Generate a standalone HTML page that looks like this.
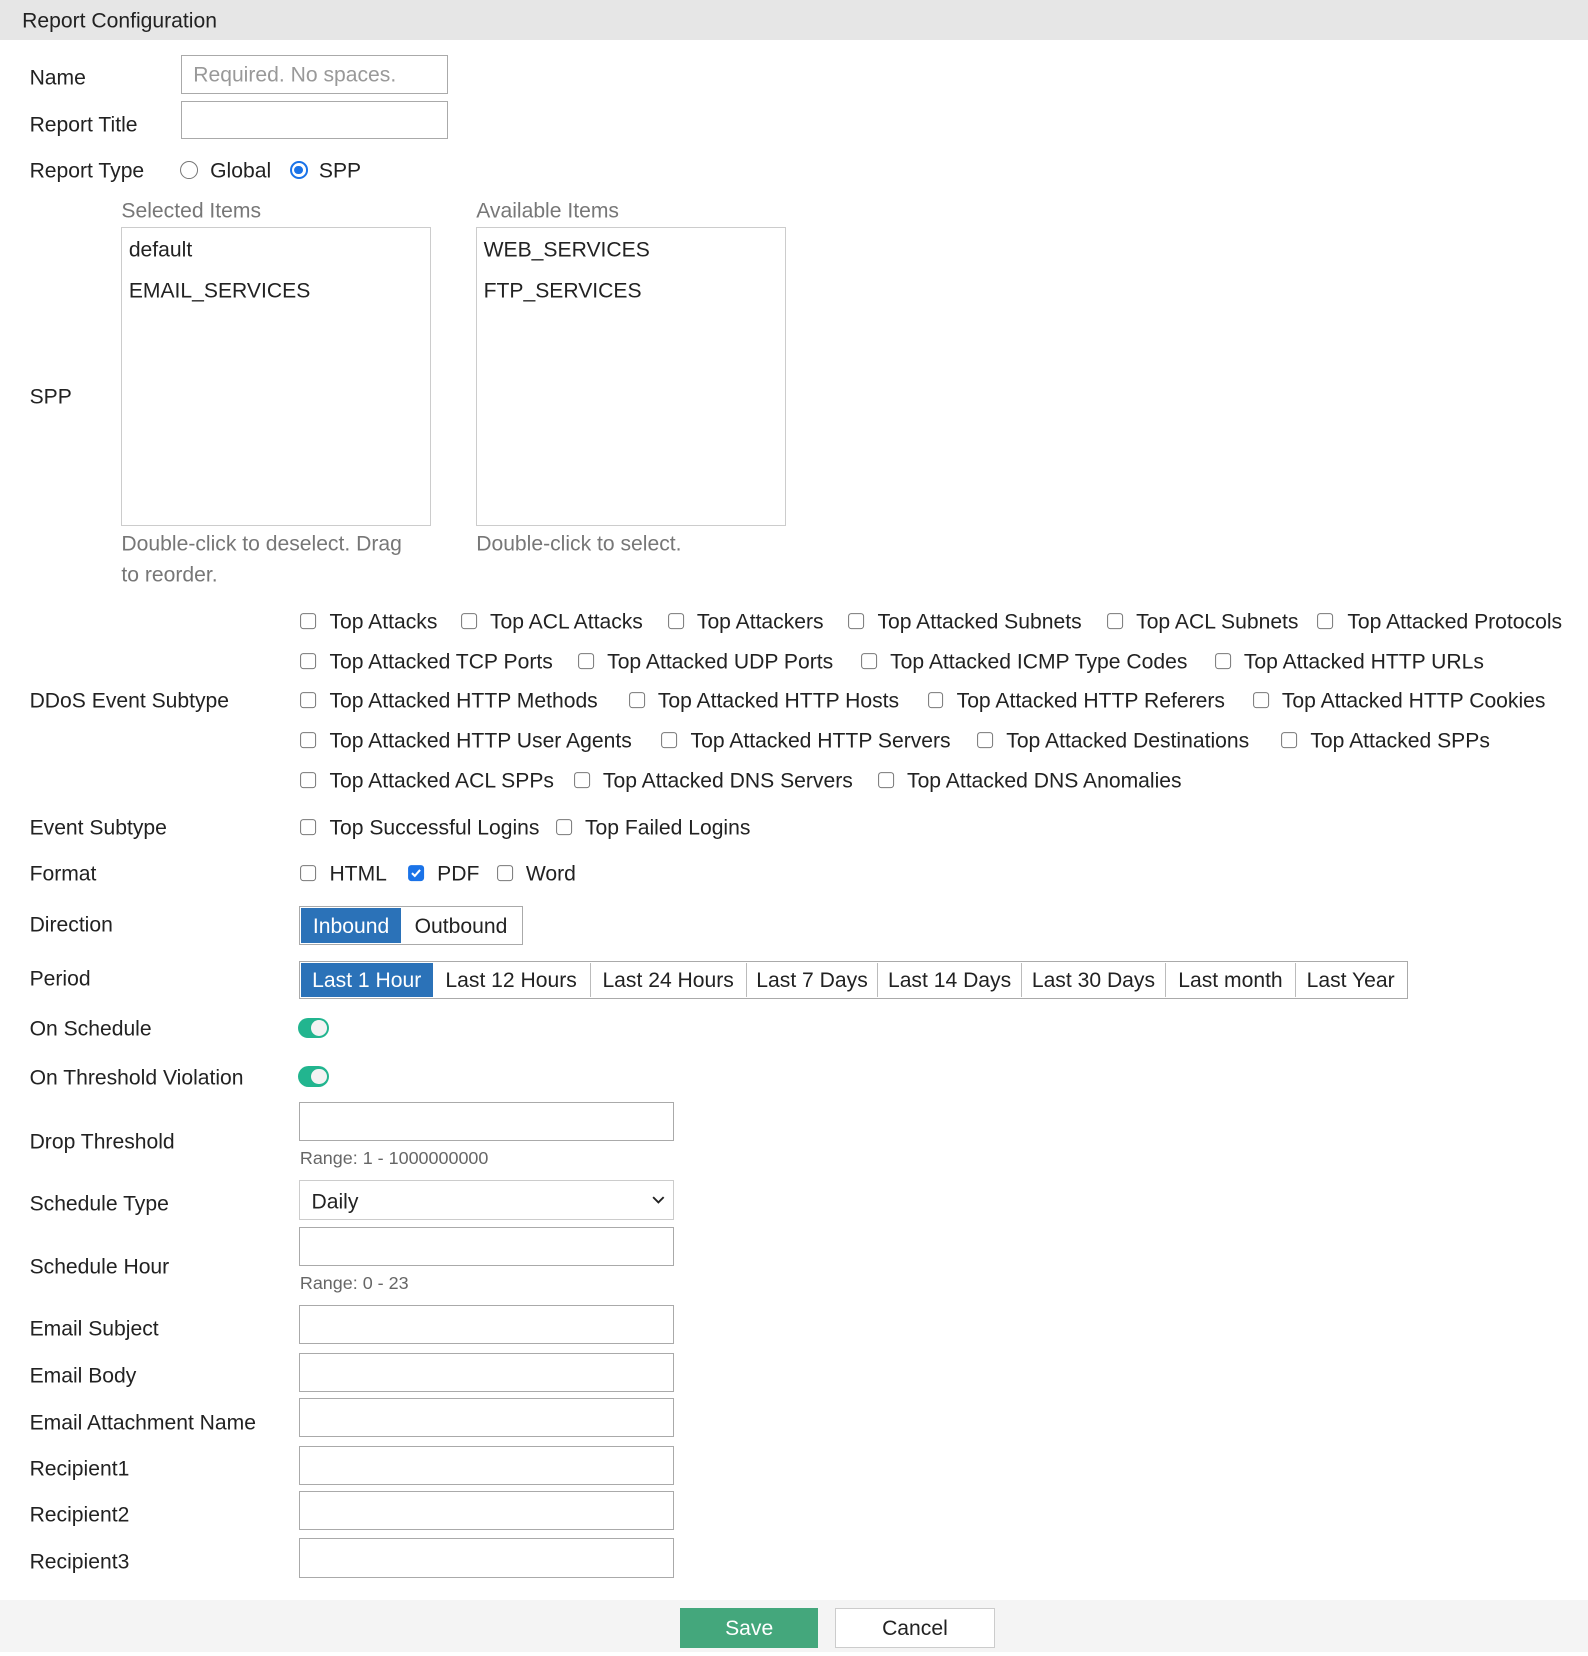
<!DOCTYPE html>
<html><head><meta charset="utf-8"><style>
html,body{margin:0;padding:0;background:#fff;}
body{zoom:1.0559;width:1504px;height:1568px;position:relative;overflow:hidden;font-family:"Liberation Sans",sans-serif;color:#222;font-size:20px;}
.t{position:absolute;line-height:1;transform:translateY(-44%);white-space:nowrap;}
.g{color:#777;}
.box{position:absolute;border:1px solid #aaa;box-sizing:border-box;background:#fff;}
.cb{position:absolute;width:15px;height:15px;border:1.4px solid #777;border-radius:3px;box-sizing:border-box;transform:translate(-50%,-50%);background:#fff;}
.rd{position:absolute;width:17px;height:17px;border:1.3px solid #777;border-radius:50%;box-sizing:border-box;transform:translate(-50%,-50%);}
.seg{position:absolute;display:flex;border:1px solid #aaa;box-sizing:border-box;}
.seg div{display:flex;align-items:center;justify-content:center;border-left:1px solid #bbb;box-sizing:border-box;height:100%;padding-top:2px;}
.seg div:first-child{border-left:none;background:#2b72b8;color:#fff;}
.tg{position:absolute;width:30px;height:19px;border-radius:10px;background:#22b58f;}
.tg::after{content:"";position:absolute;right:2px;top:2px;width:15px;height:15px;border-radius:50%;background:#f3f3f3;}
.sm{font-size:17px;color:#666;}
</style></head><body>
<div style="position:absolute;left:0;top:0;width:1504px;height:38px;background:#e6e6e6"></div>
<div class="t" style="left:21px;top:19px;font-size:20px">Report Configuration</div>

<div class="t" style="left:28px;top:73px">Name</div>
<div class="box" style="left:171px;top:52px;width:253px;height:37px"></div>
<div class="t g" style="left:183px;top:70px;color:#999">Required. No spaces.</div>
<div class="t" style="left:28px;top:117px">Report Title</div>
<div class="box" style="left:171px;top:96px;width:253px;height:36px"></div>
<div class="t" style="left:28px;top:161px">Report Type</div>
<div class="rd" style="left:179px;top:161px"></div>
<div class="t" style="left:199px;top:161px">Global</div>
<div class="rd" style="left:283px;top:161px;border:2px solid #1a73e8"><div style="position:absolute;left:2.5px;top:2.5px;width:8px;height:8px;border-radius:50%;background:#1a73e8"></div></div>
<div class="t" style="left:302px;top:161px">SPP</div>

<div class="t g" style="left:115px;top:199px">Selected Items</div>
<div class="t g" style="left:451px;top:199px">Available Items</div>
<div class="box" style="left:115px;top:215px;width:293px;height:283px;border-color:#ccc"></div>
<div class="box" style="left:451px;top:215px;width:293px;height:283px;border-color:#ccc"></div>
<div class="t" style="left:122px;top:236px">default</div>
<div class="t" style="left:122px;top:275px">EMAIL_SERVICES</div>
<div class="t" style="left:458px;top:236px">WEB_SERVICES</div>
<div class="t" style="left:458px;top:275px">FTP_SERVICES</div>
<div class="t" style="left:28px;top:375px">SPP</div>
<div class="t g" style="left:115px;top:514px">Double-click to deselect. Drag</div>
<div class="t g" style="left:115px;top:544px">to reorder.</div>
<div class="t g" style="left:451px;top:514px">Double-click to select.</div>

<div class="t" style="left:28px;top:663px">DDoS Event Subtype</div>
<div class="cb" style="left:292px;top:588px"></div><div class="t" style="left:312px;top:588px">Top Attacks</div>
<div class="cb" style="left:444px;top:588px"></div><div class="t" style="left:464px;top:588px">Top ACL Attacks</div>
<div class="cb" style="left:640px;top:588px"></div><div class="t" style="left:660px;top:588px">Top Attackers</div>
<div class="cb" style="left:811px;top:588px"></div><div class="t" style="left:831px;top:588px">Top Attacked Subnets</div>
<div class="cb" style="left:1056px;top:588px"></div><div class="t" style="left:1076px;top:588px">Top ACL Subnets</div>
<div class="cb" style="left:1255px;top:588px"></div><div class="t" style="left:1276px;top:588px">Top Attacked Protocols</div>
<div class="cb" style="left:292px;top:626px"></div><div class="t" style="left:312px;top:626px">Top Attacked TCP Ports</div>
<div class="cb" style="left:555px;top:626px"></div><div class="t" style="left:575px;top:626px">Top Attacked UDP Ports</div>
<div class="cb" style="left:823px;top:626px"></div><div class="t" style="left:843px;top:626px">Top Attacked ICMP Type Codes</div>
<div class="cb" style="left:1158px;top:626px"></div><div class="t" style="left:1178px;top:626px">Top Attacked HTTP URLs</div>
<div class="cb" style="left:292px;top:663px"></div><div class="t" style="left:312px;top:663px">Top Attacked HTTP Methods</div>
<div class="cb" style="left:603px;top:663px"></div><div class="t" style="left:623px;top:663px">Top Attacked HTTP Hosts</div>
<div class="cb" style="left:886px;top:663px"></div><div class="t" style="left:906px;top:663px">Top Attacked HTTP Referers</div>
<div class="cb" style="left:1194px;top:663px"></div><div class="t" style="left:1214px;top:663px">Top Attacked HTTP Cookies</div>
<div class="cb" style="left:292px;top:701px"></div><div class="t" style="left:312px;top:701px">Top Attacked HTTP User Agents</div>
<div class="cb" style="left:634px;top:701px"></div><div class="t" style="left:654px;top:701px">Top Attacked HTTP Servers</div>
<div class="cb" style="left:933px;top:701px"></div><div class="t" style="left:953px;top:701px">Top Attacked Destinations</div>
<div class="cb" style="left:1221px;top:701px"></div><div class="t" style="left:1241px;top:701px">Top Attacked SPPs</div>
<div class="cb" style="left:292px;top:739px"></div><div class="t" style="left:312px;top:739px">Top Attacked ACL SPPs</div>
<div class="cb" style="left:551px;top:739px"></div><div class="t" style="left:571px;top:739px">Top Attacked DNS Servers</div>
<div class="cb" style="left:839px;top:739px"></div><div class="t" style="left:859px;top:739px">Top Attacked DNS Anomalies</div>

<div class="t" style="left:28px;top:783px">Event Subtype</div>
<div class="cb" style="left:292px;top:783px"></div><div class="t" style="left:312px;top:783px">Top Successful Logins</div>
<div class="cb" style="left:534px;top:783px"></div><div class="t" style="left:554px;top:783px">Top Failed Logins</div>

<div class="t" style="left:28px;top:827px">Format</div>
<div class="cb" style="left:292px;top:827px"></div><div class="t" style="left:312px;top:827px">HTML</div>
<div class="cb" style="left:394px;top:827px;background:#1a73e8;border-color:#1a73e8"><svg width="13" height="13" viewBox="0 0 12 12" style="position:absolute;left:0;top:0"><path d="M2.5 6.2 L5 8.6 L9.6 3.4" stroke="#fff" stroke-width="1.8" fill="none"/></svg></div><div class="t" style="left:414px;top:827px">PDF</div>
<div class="cb" style="left:478px;top:827px"></div><div class="t" style="left:498px;top:827px">Word</div>

<div class="t" style="left:28px;top:875px">Direction</div>
<div class="seg" style="left:283px;top:858px;height:37px;width:212px;padding:1px">
<div style="width:96px">Inbound</div><div style="width:114px;border-left:none">Outbound</div></div>

<div class="t" style="left:28px;top:926px">Period</div>
<div class="seg" style="left:283px;top:910px;height:36px;width:1050px;padding:1px">
<div style="width:125px">Last 1 Hour</div><div style="width:149px;border-left:none">Last 12 Hours</div><div style="width:148px">Last 24 Hours</div><div style="width:125px">Last 7 Days</div><div style="width:136px">Last 14 Days</div><div style="width:137px">Last 30 Days</div><div style="width:123px">Last month</div><div style="width:105px">Last Year</div></div>

<div class="t" style="left:28px;top:974px">On Schedule</div>
<div class="tg" style="left:282px;top:964px"></div>
<div class="t" style="left:28px;top:1020px">On Threshold Violation</div>
<div class="tg" style="left:282px;top:1010px"></div>

<div class="t" style="left:28px;top:1081px">Drop Threshold</div>
<div class="box" style="left:283px;top:1044px;width:355px;height:37px"></div>
<div class="t sm" style="left:284px;top:1097px">Range: 1 - 1000000000</div>
<div class="t" style="left:28px;top:1139px">Schedule Type</div>
<div class="box" style="left:283px;top:1118px;width:355px;height:37px;border-color:#ccc"></div>
<div class="t" style="left:295px;top:1137px">Daily</div>
<svg style="position:absolute;left:617px;top:1132px" width="14" height="10" viewBox="0 0 14 10"><path d="M2 2 L7 7 L12 2" stroke="#222" stroke-width="1.8" fill="none"/></svg>
<div class="t" style="left:28px;top:1199px">Schedule Hour</div>
<div class="box" style="left:283px;top:1162px;width:355px;height:37px"></div>
<div class="t sm" style="left:284px;top:1215px">Range: 0 - 23</div>
<div class="t" style="left:28px;top:1258px">Email Subject</div>
<div class="box" style="left:283px;top:1236px;width:355px;height:37px"></div>
<div class="t" style="left:28px;top:1302px">Email Body</div>
<div class="box" style="left:283px;top:1281px;width:355px;height:37px"></div>
<div class="t" style="left:28px;top:1347px">Email Attachment Name</div>
<div class="box" style="left:283px;top:1324px;width:355px;height:37px"></div>
<div class="t" style="left:28px;top:1390px">Recipient1</div>
<div class="box" style="left:283px;top:1369px;width:355px;height:37px"></div>
<div class="t" style="left:28px;top:1434px">Recipient2</div>
<div class="box" style="left:283px;top:1412px;width:355px;height:37px"></div>
<div class="t" style="left:28px;top:1478px">Recipient3</div>
<div class="box" style="left:283px;top:1457px;width:355px;height:37px"></div>

<div style="position:absolute;left:0;top:1515px;width:1504px;height:50px;background:#f4f4f4"></div>
<div style="position:absolute;left:644px;top:1523px;width:131px;height:38px;background:#44a77c;color:#fff;display:flex;align-items:center;justify-content:center;padding-top:2px;box-sizing:border-box">Save</div>
<div style="position:absolute;left:791px;top:1523px;width:151px;height:38px;background:#fff;border:1px solid #ccc;box-sizing:border-box;display:flex;align-items:center;justify-content:center;padding-top:2px">Cancel</div>
</body></html>
